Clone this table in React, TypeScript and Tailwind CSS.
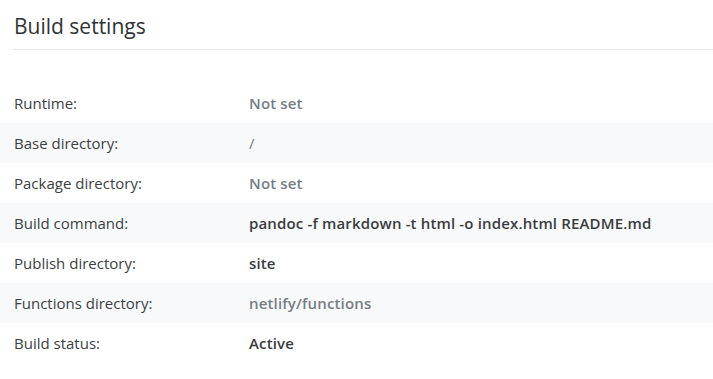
import React from 'react';

const rows = [
  { label: 'Runtime:', value: 'Not set', muted: true, bold: true },
  { label: 'Base directory:', value: '/', muted: true, bold: false },
  { label: 'Package directory:', value: 'Not set', muted: true, bold: true },
  { label: 'Build command:', value: 'pandoc -f markdown -t html -o index.html README.md', muted: false, bold: true },
  { label: 'Publish directory:', value: 'site', muted: false, bold: true },
  { label: 'Functions directory:', value: 'netlify/functions', muted: true, bold: true },
  { label: 'Build status:', value: 'Active', muted: false, bold: true },
];

export default function App() {
  return (
    <div className="min-h-screen w-full bg-white font-['Open_Sans',sans-serif] text-[#333]">
      {/* Header */}
      <div className="ml-[13px] border-b border-[#e6e8eb] pt-[12px] pb-[9px]">
        <h2 className="pl-px text-[21px] leading-[28px] font-normal text-[#2f3337]">Build settings</h2>
      </div>

      {/* Settings list */}
      <dl className="mt-[33px]">
        {rows.map((row, i) => (
          <div
            key={row.label}
            className={`flex h-[40px] items-center ${i % 2 === 1 ? 'bg-[#f8f9fa]' : 'bg-white'}`}
          >
            <dt className="w-[249px] shrink-0 pl-[14px] text-[15px] text-[#3b3f44]">{row.label}</dt>
            <dd
              className={`text-[15px] ${row.bold ? 'font-semibold tracking-[0.15px]' : 'font-normal'} ${
                row.muted ? 'text-[#767d85]' : 'text-[#383c40]'
              }`}
            >
              {row.value}
            </dd>
          </div>
        ))}
      </dl>
    </div>
  );
}
